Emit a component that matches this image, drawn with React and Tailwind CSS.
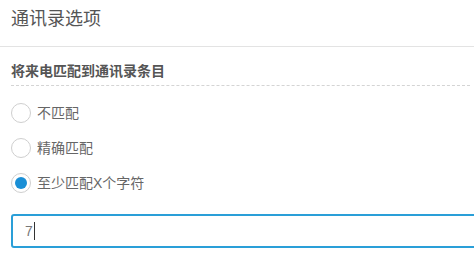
import React from 'react'

const options = ["不匹配", "精确匹配", "至少匹配X个字符"]

export default function App() {
  const selected = 2

  return (
    <div className="w-[474px] h-[260px] overflow-hidden bg-white font-['Liberation_Sans','Noto_Sans_CJK_SC',sans-serif] text-[#555]">
      <div className="h-[47px] border-b border-[#e3e3e3] pl-[11px] pt-[6px]">
        <h1 className="text-[18px] leading-[26px] text-[#555]">通讯录选项</h1>
      </div>

      <div className="pl-[11px] pr-[4px]">
        <div className="mt-[14px] border-b border-dashed border-[#d4d4d4] pb-[4px]">
          <h2 className="text-[14px] font-bold leading-[20px] text-[#555]">将来电匹配到通讯录条目</h2>
        </div>

        <div className="mt-[17px] flex flex-col gap-[15px]">
          {options.map((label, i) => (
            <label key={label} className="flex h-[20px] items-center">
              <span className="flex h-[20px] w-[20px] items-center justify-center rounded-full border border-[#cfcfcf] bg-white">
                {i === selected && <span className="h-[12px] w-[12px] rounded-full bg-[#1a8fd6]" />}
              </span>
              <span className="ml-[6px] text-[14px] leading-[20px] text-[#666]">{label}</span>
            </label>
          ))}
        </div>

        <div className="mt-[21px] flex h-[34px] w-[480px] items-center rounded-[3px] border-2 border-[#2a9fd8] pl-[12px]">
          <span className="text-[14px] leading-[20px] text-[#777]">7</span>
          <span className="ml-[1px] h-[18px] w-px bg-[#333]" />
        </div>
      </div>
    </div>
  )
}
